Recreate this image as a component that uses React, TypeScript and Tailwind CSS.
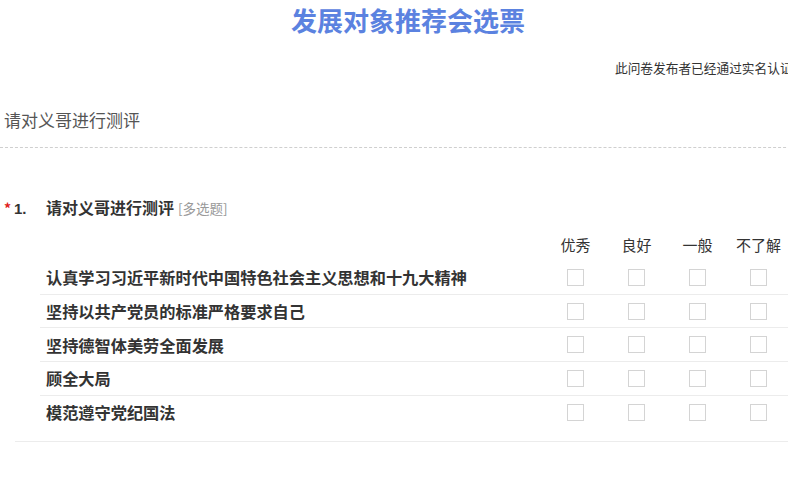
const font = { fontFamily: '"Microsoft YaHei", "Noto Sans CJK SC", "Liberation Sans", sans-serif' };

const columns = ["优秀", "良好", "一般", "不了解"];

const items = [
  "认真学习习近平新时代中国特色社会主义思想和十九大精神",
  "坚持以共产党员的标准严格要求自己",
  "坚持德智体美劳全面发展",
  "顾全大局",
  "模范遵守党纪国法",
];

function Box() {
  return <span className="block w-[17px] h-[17px] border border-[#d4d4d4] bg-white" />;
}

export default function App() {
  return (
    <div className="w-full h-[492px] overflow-hidden bg-white" style={font}>
      <div className="w-[816px]">
        {/* Title */}
        <h1 className="pt-[3px] h-[38px] text-center text-[26px] leading-[34px] font-bold text-[#5b82e0]">
          发展对象推荐会选票
        </h1>
        {/* Verified notice */}
        <div className="mt-[21px] pl-[615px] text-[12.7px] leading-[18px] text-[#333] whitespace-nowrap">
          此问卷发布者已经通过实名认证
        </div>
        {/* Description */}
        <div className="mt-[31px] pl-[4px] text-[17px] leading-[24px] text-[#555]">请对义哥进行测评</div>
        <div className="mt-[15px] border-t border-dashed border-[#cfcfcf]" />

        {/* Question */}
        <div className="mt-[48px] flex items-baseline text-[16px] leading-[22px]">
          <span className="w-[10px] pl-[4px] text-[14px] text-[#e02020] font-bold">*</span>
          <span className="w-[36px] pl-[4px] font-bold text-[#333] text-[15px]" style={{ fontFamily: '"Liberation Sans", sans-serif' }}>
            1.
          </span>
          <span className="font-bold text-[#333]">请对义哥进行测评</span>
          <span className="ml-[4px] text-[13.5px] text-[#999]">[多选题]</span>
        </div>

        <div className="mt-[9px] ml-[15px] mr-[27px] pb-[12px] border-b border-[#ececec]">
          {/* Header */}
          <div className="flex h-[32px] items-center text-[15px] text-[#333]">
            <div className="flex-1" />
            {columns.map((c) => (
              <div key={c} className="w-[61px] text-center whitespace-nowrap">
                {c}
              </div>
            ))}
          </div>
          {/* Rows */}
          <div className="ml-[25px]">
            {items.map((it, i) => (
              <div
                key={it}
                className={`flex h-[33.7px] items-center ${i < items.length - 1 ? "border-b border-[#ececec]" : ""}`}
              >
                <div className="flex-1 pl-[6px] text-[16.2px] font-bold text-[#333] whitespace-nowrap">{it}</div>
                {columns.map((c) => (
                  <div key={c} className="w-[61px] flex justify-center">
                    <Box />
                  </div>
                ))}
              </div>
            ))}
          </div>
        </div>
      </div>
    </div>
  );
}
